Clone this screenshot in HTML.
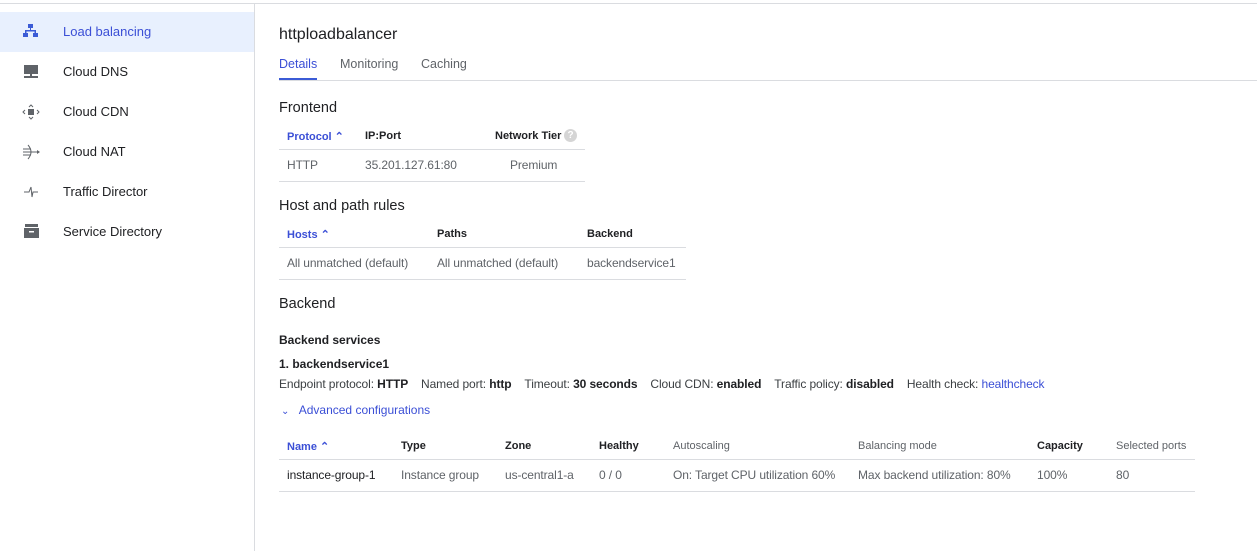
<!DOCTYPE html><html><head><style>
body{margin:0;width:1257px;height:551px;background:#fff;font-family:"Liberation Sans",Arial,sans-serif;color:#202124;position:relative;overflow:hidden}
.a{position:absolute;white-space:nowrap}
.nav{font-size:13px;color:#202124}
.h{font-size:11px;font-weight:bold;color:#202124}
.hb{color:#3b4fd6}
.d{font-size:12px;color:#5f6368;letter-spacing:-0.1px}
.line{position:absolute;height:1px;background:#dadce0}
.sec{font-size:14.5px;color:#202124}
b{font-weight:bold;color:#202124}
</style></head><body>
<div class="line" style="left:0;top:3px;width:1257px"></div>
<div style="position:absolute;left:254px;top:3px;width:1px;height:548px;background:#dadce0"></div>
<div style="position:absolute;left:0;top:12px;width:254px;height:40px;background:#e8f0fe"></div>
<svg class="a" style="left:23px;top:24px" width="16" height="15" viewBox="0 0 16 15"><rect x="5" y="0" width="5" height="4" fill="#3b5bd6"/><rect x="7" y="4" width="1" height="3" fill="#3b5bd6"/><rect x="2" y="6" width="11" height="1.5" fill="#3b5bd6"/><rect x="2" y="6" width="1.5" height="3" fill="#3b5bd6"/><rect x="11.5" y="6" width="1.5" height="3" fill="#3b5bd6"/><rect x="0" y="9" width="5" height="4" fill="#3b5bd6"/><rect x="10" y="9" width="5" height="4" fill="#3b5bd6"/></svg>
<div class="a nav" style="left:63px;top:24px;color:#3b4fd6">Load balancing</div>
<svg class="a" style="left:24px;top:65px" width="14" height="14"><rect x="0" y="0" width="14" height="9" fill="#5f6368"/><rect x="6" y="9" width="2" height="2" fill="#5f6368"/><rect x="0" y="11" width="14" height="2" fill="#5f6368"/></svg>
<div class="a nav" style="left:63px;top:64px">Cloud DNS</div>
<svg class="a" style="left:22px;top:104px" width="18" height="16"><rect x="6" y="5" width="6" height="6" fill="#5f6368"/><path d="M7 3L9 1L11 3M7 13L9 15L11 13M3 6L1 8L3 10M15 6L17 8L15 10" stroke="#5f6368" fill="none"/></svg>
<div class="a nav" style="left:63px;top:104px">Cloud CDN</div>
<svg class="a" style="left:22px;top:144px" width="18" height="16"><path d="M6 1Q12 8 6 15M1 5H9M1 8H17M1 11H9" stroke="#5f6368" fill="none"/><path d="M15 6L18 8L15 10Z" fill="#5f6368"/></svg>
<div class="a nav" style="left:63px;top:144px">Cloud NAT</div>
<svg class="a" style="left:24px;top:184px" width="14" height="16"><path d="M0 8H5L7 3L8 13L9 8H14" stroke="#5f6368" fill="none"/></svg>
<div class="a nav" style="left:63px;top:184px">Traffic Director</div>
<svg class="a" style="left:24px;top:224px" width="15" height="15"><rect x="1" y="0" width="13" height="3" fill="#5f6368"/><rect x="0" y="4" width="15" height="10" fill="#5f6368"/><rect x="5" y="7" width="5" height="1.5" fill="#fff"/></svg>
<div class="a nav" style="left:63px;top:224px">Service Directory</div>

<div class="a" style="left:279px;top:26px;font-size:16px">httploadbalancer</div>
<div class="a" style="left:279px;top:57px;font-size:12.5px;color:#3b4fd6">Details</div>
<div class="a" style="left:340px;top:57px;font-size:12.5px;color:#5f6368">Monitoring</div>
<div class="a" style="left:421px;top:57px;font-size:12.5px;color:#5f6368">Caching</div>
<div style="position:absolute;left:279px;top:78px;width:38px;height:2px;background:#3b5bd6"></div>
<div class="line" style="left:279px;top:80px;width:978px"></div>

<div class="a sec" style="left:279px;top:100px">Frontend</div>
<div class="a h hb" style="left:287px;top:130px">Protocol &#8963;</div>
<div class="a h" style="left:365px;top:130px">IP:Port</div>
<div class="a h" style="left:495px;top:130px">Network Tier</div>
<div class="a" style="left:564px;top:129px;width:13px;height:13px;border-radius:50%;background:#d5d5d5;color:#fff;font-size:10px;text-align:center;line-height:13px;font-weight:bold">?</div>
<div class="line" style="left:279px;top:149px;width:306px"></div>
<div class="a d" style="left:287px;top:158px">HTTP</div>
<div class="a d" style="left:365px;top:158px">35.201.127.61:80</div>
<div class="a d" style="left:510px;top:158px">Premium</div>
<div class="line" style="left:279px;top:181px;width:306px"></div>

<div class="a sec" style="left:279px;top:198px">Host and path rules</div>
<div class="a h hb" style="left:287px;top:228px">Hosts &#8963;</div>
<div class="a h" style="left:437px;top:228px">Paths</div>
<div class="a h" style="left:587px;top:228px">Backend</div>
<div class="line" style="left:279px;top:247px;width:407px"></div>
<div class="a d" style="left:287px;top:256px">All unmatched (default)</div>
<div class="a d" style="left:437px;top:256px">All unmatched (default)</div>
<div class="a d" style="left:587px;top:256px">backendservice1</div>
<div class="line" style="left:279px;top:279px;width:407px"></div>

<div class="a sec" style="left:279px;top:296px">Backend</div>
<div class="a" style="left:279px;top:333px;font-size:12px;font-weight:bold">Backend services</div>
<div class="a" style="left:279px;top:357px;font-size:12px;font-weight:bold">1. backendservice1</div>
<div class="a" style="left:279px;top:377px;font-size:12px;color:#3c4043;letter-spacing:-0.1px">Endpoint protocol: <b>HTTP</b>&nbsp;&nbsp;&nbsp;&nbsp;Named port: <b>http</b>&nbsp;&nbsp;&nbsp;&nbsp;Timeout: <b>30 seconds</b>&nbsp;&nbsp;&nbsp;&nbsp;Cloud CDN: <b>enabled</b>&nbsp;&nbsp;&nbsp;&nbsp;Traffic policy: <b>disabled</b>&nbsp;&nbsp;&nbsp;&nbsp;Health check: <span style="color:#3b4fd6">healthcheck</span></div>
<div class="a" style="left:281px;top:403px;font-size:12px;color:#3b4fd6"><span style="font-size:10px">&#8964;</span>&nbsp;&nbsp; Advanced configurations</div>

<div class="a h hb" style="left:287px;top:440px">Name &#8963;</div>
<div class="a h" style="left:401px;top:440px">Type</div>
<div class="a h" style="left:505px;top:440px">Zone</div>
<div class="a h" style="left:599px;top:440px">Healthy</div>
<div class="a h" style="left:673px;top:440px;font-weight:normal;color:#5f6368">Autoscaling</div>
<div class="a h" style="left:858px;top:440px;font-weight:normal;color:#5f6368">Balancing mode</div>
<div class="a h" style="left:1037px;top:440px">Capacity</div>
<div class="a h" style="left:1116px;top:440px;font-weight:normal;color:#5f6368">Selected ports</div>
<div class="line" style="left:279px;top:459px;width:916px"></div>
<div class="a d" style="left:287px;top:468px;color:#202124">instance-group-1</div>
<div class="a d" style="left:401px;top:468px">Instance group</div>
<div class="a d" style="left:505px;top:468px">us-central1-a</div>
<div class="a d" style="left:599px;top:468px">0 / 0</div>
<div class="a d" style="left:673px;top:468px">On: Target CPU utilization 60%</div>
<div class="a d" style="left:858px;top:468px">Max backend utilization: 80%</div>
<div class="a d" style="left:1037px;top:468px">100%</div>
<div class="a d" style="left:1116px;top:468px">80</div>
<div class="line" style="left:279px;top:491px;width:916px"></div>
</body></html>
